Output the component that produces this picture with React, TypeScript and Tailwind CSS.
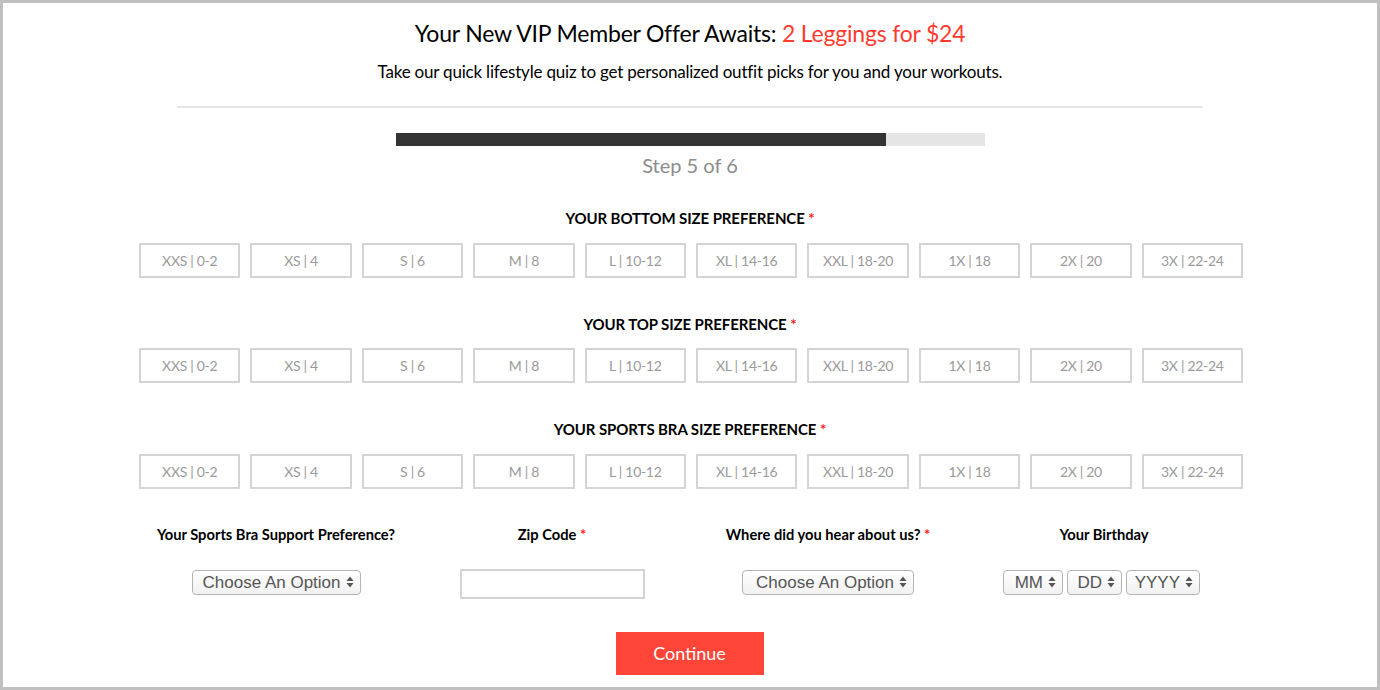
import React from 'react'

const sizes = ['XXS | 0-2', 'XS | 4', 'S | 6', 'M | 8', 'L | 10-12', 'XL | 14-16', 'XXL | 18-20', '1X | 18', '2X | 20', '3X | 22-24']

const groups = ['Your Bottom Size Preference', 'Your Top Size Preference', 'Your Sports Bra Size Preference']

function Arrows() {
  return (
    <svg width="8" height="12" viewBox="0 0 8 12" className="ml-[5px] shrink-0">
      <path d="M4 0.5 L7.5 5 L0.5 5 Z" fill="#555" />
      <path d="M4 11.5 L7.5 7 L0.5 7 Z" fill="#555" />
    </svg>
  )
}

function FakeSelect({ label, width }: { label: string; width: string }) {
  return (
    <div
      className={`${width} h-[25px] flex items-center justify-end pr-[6px] border border-[#b4b4b4] rounded-[4px] bg-gradient-to-b from-white to-[#f1f1f1] text-[#555] text-[17px] font-['Liberation_Sans',Arial,sans-serif] leading-none`}
    >
      <span>{label}</span>
      <Arrows />
    </div>
  )
}

function SizeRow({ title }: { title: string }) {
  return (
    <div className="flex flex-col items-center">
      <h3 className="text-[15px] font-bold uppercase text-black tracking-[-0.1px]">
        {title} <span className="text-[#ff1a1a]">*</span>
      </h3>
      <div className="mt-[13px] grid grid-cols-10 gap-x-[10px] w-[1104px] ml-[2px]">
        {sizes.map(s => (
          <button
            key={s}
            className="h-[35px] border-2 border-[#d4d4d4] bg-white text-[#9a9a9a] text-[14px] tracking-[-0.3px]"
          >
            {s}
          </button>
        ))}
      </div>
    </div>
  )
}

export default function App() {
  return (
    <div className="w-[1380px] h-[690px] border-[3px] border-[#c0c0c0] bg-white font-['Lato','Open_Sans',sans-serif] text-black overflow-hidden">
      {/* header */}
      <div className="flex flex-col items-center pt-[16px]">
        <h1 className="text-[23px] leading-[28px] tracking-[-0.2px]">
          Your New VIP Member Offer Awaits: <span className="text-[#ff3b30]">2 Leggings for $24</span>
        </h1>
        <p className="mt-[15px] text-[17px] leading-[20px] tracking-[-0.2px]">
          Take our quick lifestyle quiz to get personalized outfit picks for you and your workouts.
        </p>
        <div className="mt-[24px] w-[1026px] h-[2px] bg-[#e6e6e6]" />
      </div>

      {/* progress */}
      <div className="flex flex-col items-center mt-[25px]">
        <div className="w-[589px] h-[13px] bg-[#e5e5e5] flex">
          <div className="w-[490px] h-full bg-[#333]" />
        </div>
        <div className="mt-[7px] text-[20px] leading-[24px] text-[#8c8c8c]">Step 5 of 6</div>
      </div>

      {/* size groups */}
      <div className="flex flex-col items-center gap-[35px] mt-[30px]">
        {groups.map(g => (
          <SizeRow key={g} title={g} />
        ))}
      </div>

      {/* extra fields */}
      <div className="ml-[135px] mt-[34px] w-[1104px] grid grid-cols-4">
        <div className="flex flex-col items-center">
          <label className="text-[14.7px] font-bold h-[20px]">Your Sports Bra Support Preference?</label>
          <div className="mt-[27px]">
            <FakeSelect label="Choose An Option" width="w-[169px]" />
          </div>
        </div>
        <div className="flex flex-col items-center">
          <label className="text-[14.7px] font-bold h-[20px]">
            Zip Code <span className="text-[#ff1a1a]">*</span>
          </label>
          <input className="mt-[26px] w-[185px] h-[30px] border-2 border-[#d4d4d4] bg-white" />
        </div>
        <div className="flex flex-col items-center">
          <label className="text-[14.7px] font-bold h-[20px]">
            Where did you hear about us? <span className="text-[#ff1a1a]">*</span>
          </label>
          <div className="mt-[27px]">
            <FakeSelect label="Choose An Option" width="w-[172px]" />
          </div>
        </div>
        <div className="flex flex-col items-center">
          <label className="text-[14.7px] font-bold h-[20px]">Your Birthday</label>
          <div className="mt-[27px] flex gap-[4px] mr-[5px]">
            <FakeSelect label="MM" width="w-[60px]" />
            <FakeSelect label="DD" width="w-[55px]" />
            <FakeSelect label="YYYY" width="w-[74px]" />
          </div>
        </div>
      </div>

      <div className="flex justify-center mt-[33px] ml-[-1px]">
        <button className="w-[148px] h-[43px] bg-[#ff4438] text-white text-[18px]">Continue</button>
      </div>
    </div>
  )
}
